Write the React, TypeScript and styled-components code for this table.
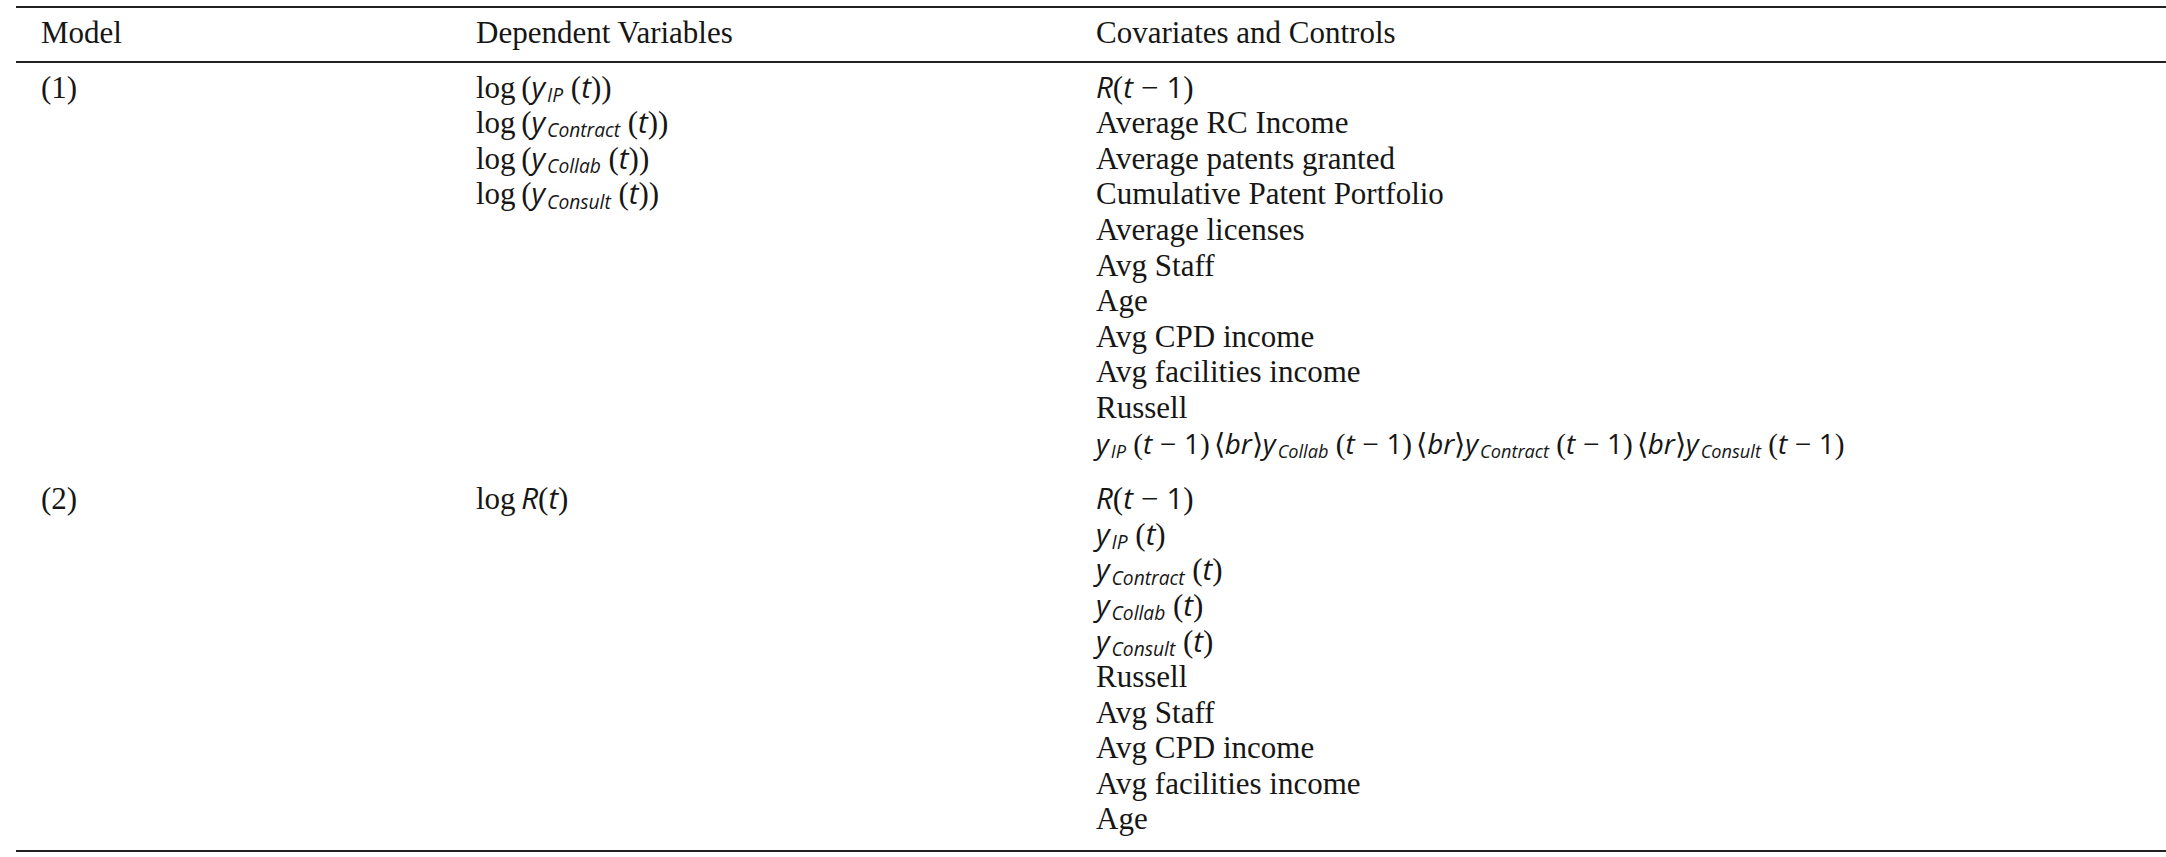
import React from 'react';
import styled, { createGlobalStyle } from 'styled-components';

const GlobalStyle = createGlobalStyle`
  html, body {
    margin: 0;
    padding: 0;
    background: #ffffff;
  }
  body {
    font-family: "Liberation Serif", "Times New Roman", serif;
    color: #161616;
  }
`;

const Page = styled.div`
  padding: 6px 0 0 16px;
`;

const Table = styled.div`
  display: grid;
  grid-template-columns: 435px 620px 1fr;
  border-top: 2px solid #222;
  border-bottom: 2px solid #222;
  font-size: 31px;
  line-height: 35.6px;
`;

const HeadCell = styled.div`
  padding: 7px 0 10px 25px;
  border-bottom: 2px solid #222;
  white-space: nowrap;
`;

const Cell = styled.div`
  padding: 7px 0 13px 25px;
  display: flex;
  flex-direction: column;
  white-space: nowrap;
`;

const Line = styled.div<{ $compact?: boolean }>`
  height: 35.6px;
  font-size: ${(p) => (p.$compact ? '0.945em' : '1em')};
`;

const Mi = styled.span`
  font-family: "Open Sans", "DejaVu Sans", sans-serif;
  font-style: italic;
  font-size: 0.95em;
`;

const Sub = styled.span`
  font-family: "Open Sans", "DejaVu Sans", sans-serif;
  font-style: italic;
  font-size: 0.62em;
  line-height: 1;
  vertical-align: -0.22em;
  margin-left: 2px;
  margin-right: 0.4em;
`;

const Paren = styled.span``;

const Num = styled.span`
  font-family: "Open Sans", "DejaVu Sans", sans-serif;
  font-size: 0.95em;
`;

const Op = styled.span`
  margin: 0 0.26em;
`;

const Fn = styled.span`
  margin-right: 0.18em;
`;

const Angle = styled.span`
  margin-left: 0.14em;
`;

const Y = ({ s }: { s: string }) => (
  <>
    <Mi>y</Mi>
    <Sub>{s}</Sub>
  </>
);

const Tt = () => (
  <>
    <Paren>(</Paren>
    <Mi>t</Mi>
    <Paren>)</Paren>
  </>
);

const Tm1 = () => (
  <>
    <Paren>(</Paren>
    <Mi>t</Mi>
    <Op>−</Op>
    <Num>1</Num>
    <Paren>)</Paren>
  </>
);

const Br = () => (
  <Angle>
    ⟨<Mi>br</Mi>⟩
  </Angle>
);

const LogY = ({ s }: { s: string }) => (
  <>
    <Fn>log</Fn>
    <Paren>(</Paren>
    <Y s={s} />
    <Tt />
    <Paren>)</Paren>
  </>
);

const RLag = () => (
  <>
    <Mi>R</Mi>
    <Tm1 />
  </>
);

type Entry = React.ReactNode | { node: React.ReactNode; compact: boolean };

type Row = {
  model: string;
  deps: React.ReactNode[];
  covs: Entry[];
};

const isCompact = (e: Entry): e is { node: React.ReactNode; compact: boolean } =>
  typeof e === 'object' && e !== null && 'compact' in (e as object);

const rows: Row[] = [
  {
    model: '(1)',
    deps: [<LogY s="IP" />, <LogY s="Contract" />, <LogY s="Collab" />, <LogY s="Consult" />],
    covs: [
      <RLag />,
      'Average RC Income',
      'Average patents granted',
      'Cumulative Patent Portfolio',
      'Average licenses',
      'Avg Staff',
      'Age',
      'Avg CPD income',
      'Avg facilities income',
      'Russell',
      {
        compact: true,
        node: (
          <>
            <Y s="IP" />
            <Tm1 />
            <Br />
            <Y s="Collab" />
            <Tm1 />
            <Br />
            <Y s="Contract" />
            <Tm1 />
            <Br />
            <Y s="Consult" />
            <Tm1 />
          </>
        ),
      },
    ],
  },
  {
    model: '(2)',
    deps: [
      <>
        <Fn>log</Fn>
        <Mi>R</Mi>
        <Tt />
      </>,
    ],
    covs: [
      <RLag />,
      <>
        <Y s="IP" />
        <Tt />
      </>,
      <>
        <Y s="Contract" />
        <Tt />
      </>,
      <>
        <Y s="Collab" />
        <Tt />
      </>,
      <>
        <Y s="Consult" />
        <Tt />
      </>,
      'Russell',
      'Avg Staff',
      'Avg CPD income',
      'Avg facilities income',
      'Age',
    ],
  },
];

export default function App() {
  return (
    <>
      <GlobalStyle />
      <Page>
        <Table>
          <HeadCell>Model</HeadCell>
          <HeadCell>Dependent Variables</HeadCell>
          <HeadCell>Covariates and Controls</HeadCell>
          {rows.map((row) => (
            <React.Fragment key={row.model}>
              <Cell>
                <Line>{row.model}</Line>
              </Cell>
              <Cell>
                {row.deps.map((d, i) => (
                  <Line key={i}>{d}</Line>
                ))}
              </Cell>
              <Cell>
                {row.covs.map((c, i) =>
                  isCompact(c) ? (
                    <Line key={i} $compact={c.compact}>
                      {c.node}
                    </Line>
                  ) : (
                    <Line key={i}>{c}</Line>
                  )
                )}
              </Cell>
            </React.Fragment>
          ))}
        </Table>
      </Page>
    </>
  );
}
